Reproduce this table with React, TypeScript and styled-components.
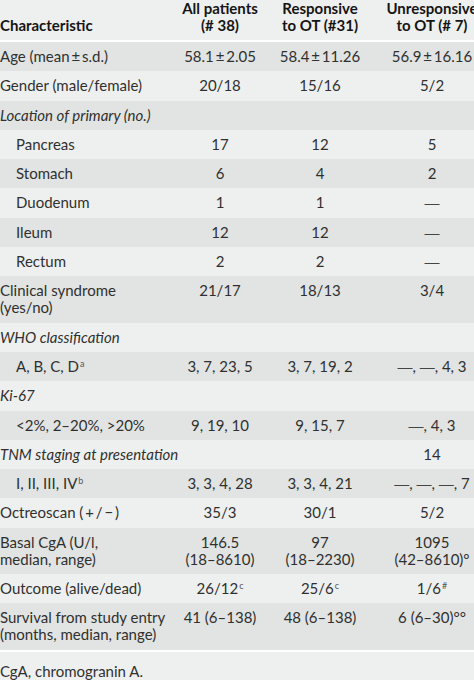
import React from 'react';
import styled, { createGlobalStyle } from 'styled-components';

const GlobalStyle = createGlobalStyle`
  html, body {
    margin: 0;
    padding: 0;
    background: #ffffff;
  }
  body {
    font-family: 'Lato', 'Liberation Sans', Arial, sans-serif;
    color: #303030;
  }
`;

const Frame = styled.div`
  width: 474px;
  height: 680px;
  overflow: hidden;
  background: #ffffff;
`;

const Table = styled.div`
  width: 496px;
  display: flex;
  flex-direction: column;
  gap: 2px;
`;

const grid = `
  display: grid;
  grid-template-columns: 168px 104px 96px 128px;
`;

const HeaderRow = styled.div`
  ${grid}
  height: 40px;
  box-sizing: border-box;
  align-items: end;
  padding-bottom: 7px;
  background: #eef0ef;
  font-weight: 700;
  font-size: 15px;
  line-height: 17px;
  color: #151515;
`;

const HeadLabel = styled.div`
  padding-left: 0;
`;

const HeadCell = styled.div`
  text-align: center;
  white-space: nowrap;
`;

const Body = styled.div`
  display: flex;
  flex-direction: column;
`;

const Row = styled.div<{ $dark: boolean }>`
  ${grid}
  align-items: start;
  padding: 6px 0 6.3px;
  background: ${(p) => (p.$dark ? '#e1e4e2' : '#eef0ef')};
  font-size: 15px;
  line-height: 17px;
`;

const Label = styled.div<{ $indent: boolean }>`
  padding-left: ${(p) => (p.$indent ? '16px' : '0')};
  white-space: nowrap;
`;

const SectionLabel = styled.div`
  grid-column: 1 / span 3;
  font-style: italic;
  white-space: nowrap;
`;

const Value = styled.div`
  text-align: center;
  white-space: nowrap;
`;

const Sup = styled.sup`
  font-size: 9px;
  line-height: 0;
  vertical-align: 5px;
  margin-left: 1px;
  color: #555555;
`;

const Dash = styled.span`
  font-family: 'Liberation Sans', Arial, sans-serif;
  color: #444444;
`;

const Footer = styled.div`
  padding: 11px 0 6px;
  background: #eef0ef;
  font-size: 15px;
  line-height: 17px;
`;

type Kind = 'plain' | 'sub' | 'section';

interface RowData {
  label: React.ReactNode;
  kind: Kind;
  values?: React.ReactNode[];
}

const T = '\u2009';
const D = <Dash>—</Dash>;

const rows: RowData[] = [
  { label: 'Age (mean' + T + '±' + T + 's.d.)', kind: 'plain', values: ['58.1' + T + '±' + T + '2.05', '58.4' + T + '±' + T + '11.26', '56.9' + T + '±' + T + '16.16'] },
  { label: 'Gender (male/female)', kind: 'plain', values: ['20/18', '15/16', '5/2'] },
  { label: 'Location of primary (no.)', kind: 'section' },
  { label: 'Pancreas', kind: 'sub', values: ['17', '12', '5'] },
  { label: 'Stomach', kind: 'sub', values: ['6', '4', '2'] },
  { label: 'Duodenum', kind: 'sub', values: ['1', '1', D] },
  { label: 'Ileum', kind: 'sub', values: ['12', '12', D] },
  { label: 'Rectum', kind: 'sub', values: ['2', '2', D] },
  { label: <>Clinical syndrome<br />(yes/no)</>, kind: 'plain', values: ['21/17', '18/13', '3/4'] },
  { label: 'WHO classification', kind: 'section' },
  { label: <>A, B, C, D<Sup>a</Sup></>, kind: 'sub', values: ['3, 7, 23, 5', '3, 7, 19, 2', <>{D}, {D}, 4, 3</>] },
  { label: 'Ki-67', kind: 'section' },
  { label: '<2%, 2–20%, >20%', kind: 'sub', values: ['9, 19, 10', '9, 15, 7', <>{D}, 4, 3</>] },
  { label: 'TNM staging at presentation', kind: 'section', values: ['14'] },
  { label: <>I, II, III, IV<Sup>b</Sup></>, kind: 'sub', values: ['3, 3, 4, 28', '3, 3, 4, 21', <>{D}, {D}, {D}, 7</>] },
  { label: 'Octreoscan (' + T + '+' + T + '/' + T + '−' + T + ')', kind: 'plain', values: ['35/3', '30/1', '5/2'] },
  { label: <>Basal CgA (U/l,<br />median, range)</>, kind: 'plain', values: [<>146.5<br />(18–8610)</>, <>97<br />(18–2230)</>, <>1095<br />(42–8610)°</>] },
  { label: 'Outcome (alive/dead)', kind: 'plain', values: [<>26/12<Sup>c</Sup></>, <>25/6<Sup>c</Sup></>, <>1/6<Sup>#</Sup></>] },
  { label: <>Survival from study entry<br />(months, median, range)</>, kind: 'plain', values: ['41 (6–138)', '48 (6–138)', <>6 (6–30)°°</>] },
];

export default function App() {
  return (
    <>
      <GlobalStyle />
      <Frame>
        <Table>
          <HeaderRow>
            <HeadLabel>Characteristic</HeadLabel>
            <HeadCell>All patients<br />(# 38)</HeadCell>
            <HeadCell>Responsive<br />to OT (#31)</HeadCell>
            <HeadCell>Unresponsive<br />to OT (# 7)</HeadCell>
          </HeaderRow>
          <Body>
            {rows.map((row, i) => (
              <Row key={i} $dark={i % 2 === 0}>
                {row.kind === 'section' ? (
                  <>
                    <SectionLabel>{row.label}</SectionLabel>
                    <Value>{row.values?.[0]}</Value>
                  </>
                ) : (
                  <>
                    <Label $indent={row.kind === 'sub'}>{row.label}</Label>
                    {row.values?.map((v, j) => (
                      <Value key={j}>{v}</Value>
                    ))}
                  </>
                )}
              </Row>
            ))}
          </Body>
          <Footer>CgA, chromogranin A.</Footer>
        </Table>
      </Frame>
    </>
  );
}
